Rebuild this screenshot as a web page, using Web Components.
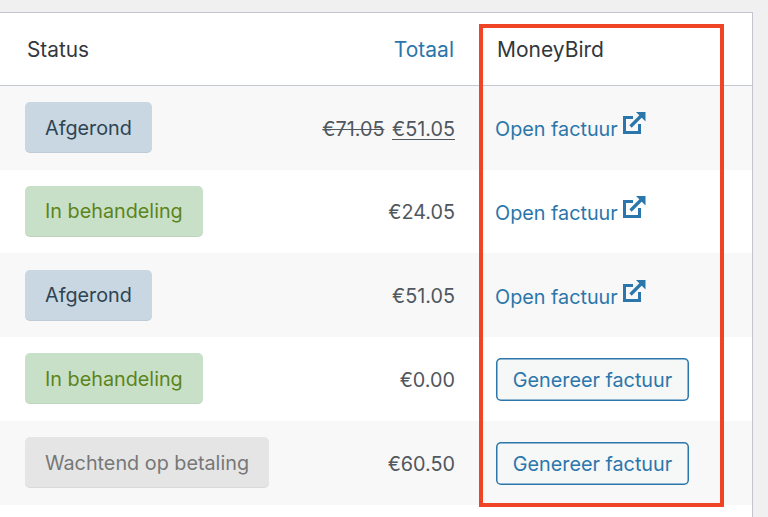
<!DOCTYPE html>
<html lang="nl">
<head>
<meta charset="utf-8">
<title>Bestellingen</title>
<style>
  html, body { margin: 0; height: 100%; overflow: hidden; }
  body {
    background: #f0f0f1;
    color: #50575e;
    font-family: Inter, "Liberation Sans", sans-serif;
    font-size: 19.8px;
  }
</style>
</head>
<body>
<order-page>
  <order-table>
    <order-head></order-head>
    <order-row striped status="afgerond" label="Afgerond" old="€71.05" total="€51.05" link></order-row>
    <order-row status="behandeling" label="In behandeling" total="€24.05" link></order-row>
    <order-row striped status="afgerond" label="Afgerond" total="€51.05" link></order-row>
    <order-row status="behandeling" label="In behandeling" total="€0.00"></order-row>
    <order-row striped status="wachtend" label="Wachtend op betaling" total="€60.50"></order-row>
  </order-table>
</order-page>

<script>
const COLS = 'grid-template-columns: 1fr 297px;';

class OrderPage extends HTMLElement {
  constructor() {
    super();
    this.attachShadow({ mode: 'open' });
    this.shadowRoot.innerHTML = `
      <style>
        :host { display: block; position: relative; padding: 12px 15px 0 0; }
        .mark {
          position: absolute;
          left: 479px;
          top: 24px;
          width: 245px;
          height: 483px;
          box-sizing: border-box;
          border: 4px solid #ef4526;
          pointer-events: none;
        }
      </style>
      <slot></slot>
      <div class="mark"></div>
    `;
  }
}

class OrderTable extends HTMLElement {
  constructor() {
    super();
    this.attachShadow({ mode: 'open' });
    this.shadowRoot.innerHTML = `
      <style>
        :host {
          display: block;
          background: #fff;
          border: 1px solid #c3c4d0;
          border-left: 0;
          border-bottom: 0;
          padding-bottom: 12px;
        }
      </style>
      <slot></slot>
    `;
  }
}

class OrderHead extends HTMLElement {
  constructor() {
    super();
    this.attachShadow({ mode: 'open' });
    this.shadowRoot.innerHTML = `
      <style>
        :host {
          display: grid;
          ${COLS}
          align-items: center;
          height: 69.8px;
          padding-top: 2px;
          border-bottom: 1px solid #c5c9d2;
          color: #32373c;
          font-size: 21px;
        }
        .left { display: flex; justify-content: space-between; }
        .status { padding-left: 27px; font-size: 20.8px; }
        .total { color: #2b76ab; padding-right: 1px; }
        .bird { padding-left: 42px; }
      </style>
      <div class="left">
        <div class="status">Status</div>
        <div class="total">Totaal</div>
      </div>
      <div class="bird">MoneyBird</div>
    `;
  }
}

class StatusBadge extends HTMLElement {
  constructor() {
    super();
    this.attachShadow({ mode: 'open' });
    this.shadowRoot.innerHTML = `
      <style>
        :host {
          display: inline-flex;
          align-items: center;
          box-sizing: border-box;
          height: 51px;
          padding: 0 20px;
          border-radius: 5px;
          white-space: nowrap;
          box-shadow: inset 0 -1px 0 rgba(0,0,0,.05);
        }
        :host([kind="afgerond"]) { background: #c8d7e1; color: #2e4453; }
        :host([kind="behandeling"]) { background: #c9e0c8; color: #5b841b; }
        :host([kind="wachtend"]) { background: #e5e5e5; color: #777; }
      </style>
      <slot></slot>
    `;
  }
}

class InvoiceLink extends HTMLElement {
  constructor() {
    super();
    this.attachShadow({ mode: 'open' });
    this.shadowRoot.innerHTML = `
      <style>
        :host {
          display: inline-flex;
          align-items: flex-start;
          margin-left: -1px;
          padding-top: 3px;
          color: #2b76ab;
          white-space: nowrap;
        }
        svg { display: block; margin: -6px 0 0 4px; }
      </style>
      <span><slot></slot></span>
      <svg width="24" height="24" viewBox="0 0 24 24" fill="none" aria-hidden="true">
        <path d="M11 6.5H2.5V21.5H17.5V13" stroke="#2b76ab" stroke-width="3"/>
        <path d="M8.5 15.5L19 5" stroke="#2b76ab" stroke-width="3.2"/>
        <path d="M14 1H23.5V10.5Z" fill="#2b76ab"/>
      </svg>
    `;
  }
}

class InvoiceButton extends HTMLElement {
  constructor() {
    super();
    this.attachShadow({ mode: 'open' });
    this.shadowRoot.innerHTML = `
      <style>
        :host {
          display: inline-flex;
          align-items: center;
          justify-content: center;
          box-sizing: border-box;
          width: 193px;
          height: 43px;
          margin-top: 1px;
          padding-top: 2px;
          border-radius: 5px;
          background: #f6f7f7;
          color: #2b76ab;
          box-shadow: inset 0 0 0 1.5px #2b76ab;
          white-space: nowrap;
        }
      </style>
      <slot></slot>
    `;
  }
}

class OrderRow extends HTMLElement {
  constructor() {
    super();
    this.attachShadow({ mode: 'open' });
  }

  connectedCallback() {
    const old = this.getAttribute('old');
    const total = this.getAttribute('total');
    this.shadowRoot.innerHTML = `
      <style>
        :host {
          display: grid;
          ${COLS}
          align-items: center;
          height: 83.75px;
          background: #fff;
        }
        :host([striped]) { background: #f8f8f8; }
        .left {
          display: flex;
          justify-content: space-between;
          align-items: center;
          padding-left: 25px;
        }
        .total { white-space: nowrap; padding-top: 2px; }
        .total s { margin-right: 2px; }
        .total u { text-underline-offset: 3px; }
        .bird { padding-left: 41px; }
      </style>
      <div class="left">
        <status-badge kind="${this.getAttribute('status')}">${this.getAttribute('label')}</status-badge>
        <div class="total">${old ? `<s>${old}</s> <u>${total}</u>` : total}</div>
      </div>
      <div class="bird">${this.hasAttribute('link')
        ? '<invoice-link>Open factuur</invoice-link>'
        : '<invoice-button>Genereer factuur</invoice-button>'}</div>
    `;
  }
}

customElements.define('order-page', OrderPage);
customElements.define('order-table', OrderTable);
customElements.define('order-head', OrderHead);
customElements.define('status-badge', StatusBadge);
customElements.define('invoice-link', InvoiceLink);
customElements.define('invoice-button', InvoiceButton);
customElements.define('order-row', OrderRow);
</script>
</body>
</html>
